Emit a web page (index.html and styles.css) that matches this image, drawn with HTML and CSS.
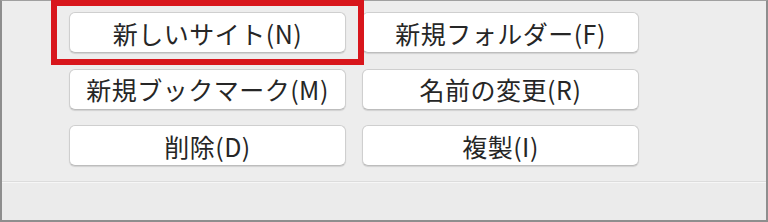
FILE: index.html
```html
<!DOCTYPE html>
<html lang="ja">
<head>
<meta charset="utf-8">
<link rel="stylesheet" href="styles.css">
</head>
<body>
<div class="frame">
  <div class="buttons">
    <button class="btn">新しいサイト(N)</button>
    <button class="btn">新規フォルダー(F)</button>
    <button class="btn">新規ブックマーク(M)</button>
    <button class="btn">名前の変更(R)</button>
    <button class="btn">削除(D)</button>
    <button class="btn">複製(I)</button>
  </div>
  <div class="footer"></div>
  <div class="highlight"></div>
</div>
</body>
</html>
```
FILE: styles.css
```css
* { box-sizing: border-box; }
html, body { margin: 0; padding: 0; }
body {
  width: 768px;
  height: 222px;
  overflow: hidden;
  background: #ececec;
  font-family: "Noto Sans CJK JP", "Noto Sans", sans-serif;
}
.frame {
  position: relative;
  width: 768px;
  height: 222px;
  background: #ededed;
  border: 2px solid #8e8e8e;
  border-top: 1px solid #a0a0a0;
  display: flex;
  flex-direction: column;
}
.buttons {
  display: grid;
  grid-template-columns: 277px 277px;
  grid-auto-rows: 41px;
  column-gap: 16px;
  row-gap: 15.5px;
  padding: 11px 0 0 67px;
  height: 180px;
}
.btn {
  margin: 0;
  padding: 0;
  background: #ffffff;
  border: 1px solid #cfcfcf;
  border-bottom-color: #bdbdbd;
  border-radius: 6px;
  box-shadow: 0 1px 1px rgba(0,0,0,0.12);
  font-family: "Noto Sans CJK JP", "Noto Sans", sans-serif;
  font-size: 25px;
  letter-spacing: 0.5px;
  color: #262626;
  line-height: 1;
  display: flex;
  align-items: center;
  justify-content: center;
  padding-top: 1px;
}
.footer {
  flex: 1;
  border-top: 1px solid #dcdcdc;
  box-shadow: inset 0 1px 0 #f6f6f6;
  background: #ebebeb;
}
.highlight {
  position: absolute;
  left: 49px;
  top: -1px;
  width: 313px;
  height: 65px;
  border: 6px solid #d8161c;
}
```
